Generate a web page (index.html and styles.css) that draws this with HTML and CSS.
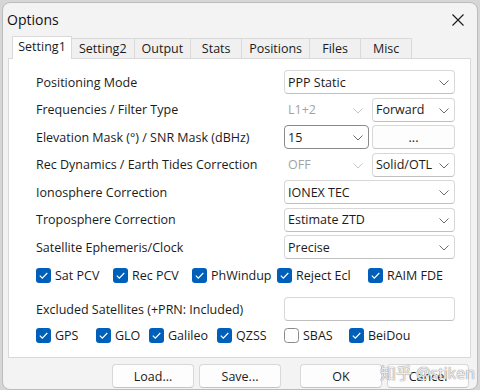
FILE: index.html
```html
<!DOCTYPE html>
<html lang="en">
<head>
    <meta charset="UTF-8">
    <title>Options</title>
    <link rel="stylesheet" href="styles.css">
</head>
<body>
    <div class="window">
        <div class="titlebar">
            <span class="title">Options</span>
            <svg class="close" width="12" height="12" viewBox="0 0 12 12">
                <path d="M0.5 0.5 L11.5 11.5 M11.5 0.5 L0.5 11.5" stroke="#1a1a1a" stroke-width="1.1" fill="none"/>
            </svg>
        </div>

        <div class="tabs">
            <div class="tab selected">Setting1</div>
            <div class="tab">Setting2</div>
            <div class="tab">Output</div>
            <div class="tab">Stats</div>
            <div class="tab">Positions</div>
            <div class="tab">Files</div>
            <div class="tab">Misc</div>
        </div>

        <div class="panel">
            <div class="rows">
                <div class="row">
                    <span class="label">Positioning Mode</span>
                    <div class="combo full"><span>PPP Static</span><svg class="chev" width="10" height="6" viewBox="0 0 10 6"><polyline points="0.5,0.5 5,5 9.5,0.5"/></svg></div>
                </div>
                <div class="row">
                    <span class="label">Frequencies / Filter Type</span>
                    <div class="pair">
                        <div class="combo half disabled"><span>L1+2</span><svg class="chev" width="10" height="6" viewBox="0 0 10 6"><polyline points="0.5,0.5 5,5 9.5,0.5"/></svg></div>
                        <div class="combo half2"><span>Forward</span><svg class="chev" width="10" height="6" viewBox="0 0 10 6"><polyline points="0.5,0.5 5,5 9.5,0.5"/></svg></div>
                    </div>
                </div>
                <div class="row">
                    <span class="label">Elevation Mask (°) / SNR Mask (dBHz)</span>
                    <div class="pair">
                        <div class="combo half focused"><span>15</span><svg class="chev" width="10" height="6" viewBox="0 0 10 6"><polyline points="0.5,0.5 5,5 9.5,0.5"/></svg></div>
                        <div class="btn half2">...</div>
                    </div>
                </div>
                <div class="row">
                    <span class="label">Rec Dynamics / Earth Tides Correction</span>
                    <div class="pair">
                        <div class="combo half disabled"><span>OFF</span><svg class="chev" width="10" height="6" viewBox="0 0 10 6"><polyline points="0.5,0.5 5,5 9.5,0.5"/></svg></div>
                        <div class="combo half2"><span>Solid/OTL</span><svg class="chev" width="10" height="6" viewBox="0 0 10 6"><polyline points="0.5,0.5 5,5 9.5,0.5"/></svg></div>
                    </div>
                </div>
                <div class="row">
                    <span class="label">Ionosphere Correction</span>
                    <div class="combo full"><span>IONEX TEC</span><svg class="chev" width="10" height="6" viewBox="0 0 10 6"><polyline points="0.5,0.5 5,5 9.5,0.5"/></svg></div>
                </div>
                <div class="row">
                    <span class="label">Troposphere Correction</span>
                    <div class="combo full"><span>Estimate ZTD</span><svg class="chev" width="10" height="6" viewBox="0 0 10 6"><polyline points="0.5,0.5 5,5 9.5,0.5"/></svg></div>
                </div>
                <div class="row">
                    <span class="label">Satellite Ephemeris/Clock</span>
                    <div class="combo full"><span>Precise</span><svg class="chev" width="10" height="6" viewBox="0 0 10 6"><polyline points="0.5,0.5 5,5 9.5,0.5"/></svg></div>
                </div>
            </div>

            <div class="checks corrections">
                <label class="check"><svg width="15" height="15" viewBox="0 0 15 15"><rect width="15" height="15" rx="3" fill="#005fb8"/><path d="M3.8 7.6 L6.3 10.1 L11.3 5" stroke="#fff" stroke-width="1.2" fill="none"/></svg>Sat PCV</label>
                <label class="check"><svg width="15" height="15" viewBox="0 0 15 15"><rect width="15" height="15" rx="3" fill="#005fb8"/><path d="M3.8 7.6 L6.3 10.1 L11.3 5" stroke="#fff" stroke-width="1.2" fill="none"/></svg>Rec PCV</label>
                <label class="check"><svg width="15" height="15" viewBox="0 0 15 15"><rect width="15" height="15" rx="3" fill="#005fb8"/><path d="M3.8 7.6 L6.3 10.1 L11.3 5" stroke="#fff" stroke-width="1.2" fill="none"/></svg>PhWindup</label>
                <label class="check"><svg width="15" height="15" viewBox="0 0 15 15"><rect width="15" height="15" rx="3" fill="#005fb8"/><path d="M3.8 7.6 L6.3 10.1 L11.3 5" stroke="#fff" stroke-width="1.2" fill="none"/></svg>Reject Ecl</label>
                <label class="check"><svg width="15" height="15" viewBox="0 0 15 15"><rect width="15" height="15" rx="3" fill="#005fb8"/><path d="M3.8 7.6 L6.3 10.1 L11.3 5" stroke="#fff" stroke-width="1.2" fill="none"/></svg>RAIM FDE</label>
            </div>

            <div class="row excluded">
                <span class="label">Excluded Satellites (+PRN: Included)</span>
                <div class="textbox full"></div>
            </div>

            <div class="checks systems">
                <label class="check"><svg width="15" height="15" viewBox="0 0 15 15"><rect width="15" height="15" rx="3" fill="#005fb8"/><path d="M3.8 7.6 L6.3 10.1 L11.3 5" stroke="#fff" stroke-width="1.2" fill="none"/></svg>GPS</label>
                <label class="check"><svg width="15" height="15" viewBox="0 0 15 15"><rect width="15" height="15" rx="3" fill="#005fb8"/><path d="M3.8 7.6 L6.3 10.1 L11.3 5" stroke="#fff" stroke-width="1.2" fill="none"/></svg>GLO</label>
                <label class="check"><svg width="15" height="15" viewBox="0 0 15 15"><rect width="15" height="15" rx="3" fill="#005fb8"/><path d="M3.8 7.6 L6.3 10.1 L11.3 5" stroke="#fff" stroke-width="1.2" fill="none"/></svg>Galileo</label>
                <label class="check"><svg width="15" height="15" viewBox="0 0 15 15"><rect width="15" height="15" rx="3" fill="#005fb8"/><path d="M3.8 7.6 L6.3 10.1 L11.3 5" stroke="#fff" stroke-width="1.2" fill="none"/></svg>QZSS</label>
                <label class="check"><svg width="15" height="15" viewBox="0 0 15 15"><rect x="0.5" y="0.5" width="14" height="14" rx="3" fill="#fdfdfd" stroke="#8a8a8a"/></svg>SBAS</label>
                <label class="check"><svg width="15" height="15" viewBox="0 0 15 15"><rect width="15" height="15" rx="3" fill="#005fb8"/><path d="M3.8 7.6 L6.3 10.1 L11.3 5" stroke="#fff" stroke-width="1.2" fill="none"/></svg>BeiDou</label>
            </div>
        </div>

        <div class="footer">
            <div class="btn action">Load...</div>
            <div class="btn action">Save...</div>
            <div class="btn action ok">OK</div>
            <div class="btn action">Cancel</div>
        </div>

        <div class="watermark">知乎 @stiken</div>
    </div>
</body>
</html>
```

FILE: styles.css
```css
body {
    margin: 0;
    padding: 0;
    background: #d6d6d6;
    font-family: "Open Sans", "Noto Sans CJK SC", sans-serif;
    font-size: 12.5px;
    color: #1b1b1b;
}

.window {
    position: relative;
    margin: 2px 0 0 2px;
    width: 476px;
    height: 388px;
    box-sizing: border-box;
    border: 1px solid #bcbcbc;
    border-radius: 8px;
    background: #f3f3f3;
    overflow: hidden;
}

.titlebar {
    height: 33px;
    display: flex;
    align-items: center;
    padding-left: 4px;
}

.title {
    font-size: 14px;
    color: #111;
}

.close {
    margin-left: auto;
    margin-right: 13px;
}

/* tab strip */
.tabs {
    display: flex;
    height: 22px;
    margin-left: 9px;
}

.tab {
    margin-top: 2px;
    height: 20px;
    min-width: 52px;
    padding: 0 7px;
    box-sizing: border-box;
    display: flex;
    align-items: center;
    justify-content: center;
    background: #f0f0f0;
    border: 1px solid #d9d9d9;
    border-bottom: none;
    margin-left: -1px;
    color: #1b1b1b;
}

.tab.selected {
    margin-top: 0;
    height: 23px;
    width: 60px;
    margin-left: 0;
    background: #fff;
    position: relative;
    z-index: 1;
    padding-bottom: 3px;
}

.panel {
    margin-left: 5px;
    width: 463px;
    height: 300px;
    box-sizing: border-box;
    background: #fff;
    border: 1px solid #d9d9d9;
    padding: 11px 0 0 27px;
}

.rows {
    display: flex;
    flex-direction: column;
    gap: 3.5px;
}

.row {
    display: flex;
    align-items: center;
    height: 24px;
}

.label {
    width: 248px;
    white-space: nowrap;
}

.pair {
    display: flex;
    gap: 3px;
}

.combo {
    height: 24px;
    box-sizing: border-box;
    display: flex;
    align-items: center;
    justify-content: space-between;
    padding: 0 5px 0 3px;
    border: 1px solid #d8d8d8;
    border-bottom-color: #c0c0c0;
    border-radius: 4px;
    background: #fff;
}

.full {
    width: 171px;
}

.half {
    width: 85px;
}

.half2 {
    width: 83px;
}

.combo.disabled {
    border-color: transparent;
    color: #a3a3a3;
}

.combo.focused {
    border-color: #8a8a8a;
}

.chev {
    margin-top: 2px;
    fill: none;
    stroke: #6a6a6a;
    stroke-width: 1;
}

.combo.disabled .chev {
    stroke: #c6c6c6;
}

.btn {
    height: 24px;
    box-sizing: border-box;
    display: flex;
    align-items: center;
    justify-content: center;
    border: 1px solid #d8d8d8;
    border-bottom-color: #c4c4c4;
    border-radius: 4px;
    background: #fdfdfd;
}

.checks {
    display: grid;
    align-items: center;
    height: 15px;
}

.corrections {
    margin-top: 8px;
    grid-template-columns: 77px 79px 85px 91px auto;
}

.systems {
    margin-top: 6px;
    grid-template-columns: 60px 53px 68px 67px 65px auto;
}

.check {
    display: flex;
    align-items: center;
    gap: 4px;
    white-space: nowrap;
}

.excluded {
    margin-top: 15px;
}

.textbox {
    height: 24px;
    box-sizing: border-box;
    border: 1px solid #d8d8d8;
    border-bottom-color: #c0c0c0;
    border-radius: 4px;
}

.footer {
    display: flex;
    justify-content: flex-end;
    padding: 6px 8px 0 0;
}

.action {
    width: 82px;
    margin-left: 5px;
}

.action.ok {
    margin-left: 19px;
}

.watermark {
    position: absolute;
    left: 377px;
    top: 357px;
    font-size: 16px;
    color: rgba(255, 255, 255, 0.85);
    text-shadow: 0 0 1px #8a8a8a, 0 0 1px #8a8a8a;
    white-space: nowrap;
}
```
